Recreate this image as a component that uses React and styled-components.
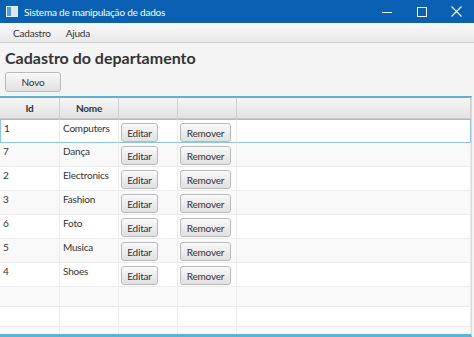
import React from 'react';
import styled, { createGlobalStyle } from 'styled-components';

const GlobalStyle = createGlobalStyle`
    html, body {
        margin: 0;
        padding: 0;
        width: 474px;
        height: 337px;
        overflow: hidden;
        background: #f4f4f4;
        font-family: Lato, "Noto Sans", sans-serif;
    }
`;

const Window = styled.div`
    width: 474px;
    height: 337px;
    display: flex;
    flex-direction: column;
    background: #f4f4f4;
`;

const TitleBar = styled.div`
    height: 23px;
    background: #0a60b3;
    display: flex;
    align-items: center;
    color: #ffffff;
    font-size: 10px;
    letter-spacing: -0.2px;
`;

const AppIcon = styled.div`
    width: 10px;
    height: 9px;
    margin: 0 6px 0 6px;
    border: 1px solid #e8eef5;
    background: linear-gradient(90deg, #4fa0d8 0 45%, #dfe6ee 45% 100%);
`;

const TitleText = styled.span`
    flex: 1;
`;

const WinButton = styled.div`
    width: 35px;
    height: 23px;
    display: flex;
    align-items: center;
    justify-content: center;
`;

const MenuBar = styled.div`
    height: 19px;
    display: flex;
    align-items: center;
    padding: 0 13px;
    gap: 15px;
    background: linear-gradient(#fafafa, #e9e9e9);
    border-bottom: 1px solid #cfcfcf;
    font-size: 10px;
    letter-spacing: -0.2px;
    color: #333;
`;

const Heading = styled.h1`
    margin: 4px 0 0 5px;
    font-size: 16px;
    font-weight: 700;
    color: #333;
    line-height: 22px;
`;

const Toolbar = styled.div`
    padding: 3px 5px 0 5px;
    height: 24px;
    display: flex;
    align-items: flex-start;
`;

const Button = styled.button`
    width: ${p => p.$w}px;
    height: ${p => p.$h || 20}px;
    padding: 0;
    font-family: inherit;
    font-size: 10px;
    letter-spacing: -0.2px;
    color: #333;
    border: 1px solid #b9b9b9;
    border-radius: 3px;
    background: linear-gradient(#f8f8f8, #e1e1e1);
    box-shadow: inset 0 1px 0 #ffffff;
`;

const Table = styled.div`
    flex: 1;
    margin-right: 2px;
    border-top: 2px solid #5cb1d8;
    border-right: 1px solid #cfdde5;
    border-bottom: 3px solid #5ab4d6;
    background: #ffffff;
    display: grid;
    grid-template-columns: 60px 59px 59px 59px 1fr;
    grid-auto-rows: min-content;
    overflow: hidden;
    font-size: 10px;
    letter-spacing: -0.2px;
    color: #333;
`;

const HeadCell = styled.div`
    height: 20px;
    display: flex;
    align-items: center;
    justify-content: center;
    font-weight: 700;
    background: linear-gradient(#f6f6f6, #e2e2e2);
    border-right: 1px solid #d0d0d0;
    border-bottom: 1px solid #c8c8c8;
`;

const Row = styled.div`
    display: contents;
`;

const Cell = styled.div`
    height: ${p => p.$h}px;
    box-sizing: border-box;
    display: flex;
    align-items: flex-start;
    padding: 2px 0 0 3px;
    background: ${p => (p.$odd ? '#f9f9f9' : '#ffffff')};
    border-right: 1px solid #ececec;
    border-bottom: 1px solid #ececec;
    ${p => p.$selected && `
        border-top: 1px solid #8cc7e2;
        border-bottom: 1px solid #8cc7e2;
    `}
    ${p => p.$first && p.$selected && `border-left: 1px solid #8cc7e2;`}
    ${p => p.$last && p.$selected && `border-right: 1px solid #8cc7e2;`}
`;

const ButtonCell = styled(Cell)`
    padding: 3px 0 0 2px;
`;

const departments = [
    { id: 1, nome: 'Computers' },
    { id: 7, nome: 'Dança' },
    { id: 2, nome: 'Electronics' },
    { id: 3, nome: 'Fashion' },
    { id: 6, nome: 'Foto' },
    { id: 5, nome: 'Musica' },
    { id: 4, nome: 'Shoes' },
];

function App() {
    return (
        <Window>
            <GlobalStyle />
            <TitleBar>
                <AppIcon />
                <TitleText>Sistema de manipulação de dados</TitleText>
                <WinButton>
                    <svg width="10" height="10" viewBox="0 0 10 10"><path d="M0 5.5h10" stroke="#fff" strokeWidth="1" /></svg>
                </WinButton>
                <WinButton>
                    <svg width="10" height="10" viewBox="0 0 10 10"><rect x="0.5" y="0.5" width="9" height="9" fill="none" stroke="#fff" strokeWidth="1" /></svg>
                </WinButton>
                <WinButton>
                    <svg width="11" height="11" viewBox="0 0 11 11"><path d="M0.5 0.5l10 10M10.5 0.5l-10 10" stroke="#fff" strokeWidth="1.1" /></svg>
                </WinButton>
            </TitleBar>
            <MenuBar>
                <span>Cadastro</span>
                <span>Ajuda</span>
            </MenuBar>
            <Heading>Cadastro do departamento</Heading>
            <Toolbar>
                <Button $w={56}>Novo</Button>
            </Toolbar>
            <Table>
                <HeadCell>Id</HeadCell>
                <HeadCell>Nome</HeadCell>
                <HeadCell />
                <HeadCell />
                <HeadCell />
                {departments.map((d, i) => {
                    const odd = i % 2 === 1;
                    const sel = i === 0;
                    const h = 24;
                    return (
                        <Row key={d.id}>
                            <Cell $h={h} $odd={odd} $selected={sel} $first>{d.id}</Cell>
                            <Cell $h={h} $odd={odd} $selected={sel}>{d.nome}</Cell>
                            <ButtonCell $h={h} $odd={odd} $selected={sel}>
                                <Button $w={37} $h={19}>Editar</Button>
                            </ButtonCell>
                            <ButtonCell $h={h} $odd={odd} $selected={sel}>
                                <Button $w={51} $h={19}>Remover</Button>
                            </ButtonCell>
                            <Cell $h={h} $odd={odd} $selected={sel} $last />
                        </Row>
                    );
                })}
                {[0, 1, 2].map(i => (
                    <Row key={'e' + i}>
                        {[0, 1, 2, 3, 4].map(c => (
                            <Cell key={c} $h={20} $odd={i % 2 === 0} />
                        ))}
                    </Row>
                ))}
            </Table>
        </Window>
    );
}

export default App;
